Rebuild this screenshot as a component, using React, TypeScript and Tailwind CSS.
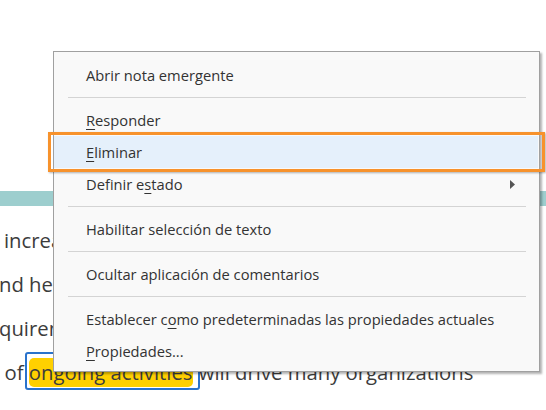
import React from "react";

const Item = ({ children, arrow }: { children: React.ReactNode; arrow?: boolean }) => (
  <div className="relative flex h-[32px] items-center pl-[32px] pr-[30px] whitespace-nowrap">
    <span>{children}</span>
    {arrow && (
      <svg className="absolute right-[24px] top-[12px]" width="5" height="9" viewBox="0 0 5 9">
        <path d="M0 0 L5 4.5 L0 9 Z" fill="#555" />
      </svg>
    )}
  </div>
);

const Sep = () => (
  <div className="py-[6px] pl-[14px] pr-[13px]">
    <div className="h-px bg-[#d4d4d4]" />
  </div>
);

const U = ({ children }: { children: React.ReactNode }) => (
  <span className="underline decoration-1 underline-offset-[3px]">{children}</span>
);

export default function App() {
  return (
    <div
      className="relative h-[410px] w-[546px] overflow-hidden bg-white"
      style={{ fontFamily: '"Open Sans", "Noto Sans", sans-serif' }}
    >
      {/* background document */}
      <div className="pt-[191px] text-[20.3px] text-[#3c3c3c]">
        <div className="h-[15px] bg-[#9dcece]" />
        <div className="mt-[12px] flex flex-col leading-[44px]">
          <div className="ml-[4px] whitespace-nowrap">increasing demands</div>
          <div className="ml-[-1px] whitespace-nowrap">nd help</div>
          <div className="ml-[-1px] whitespace-nowrap">quirements</div>
          <div className="ml-[-8px] flex items-center whitespace-nowrap">
            <span>t of&nbsp;</span>
            <span className="relative flex h-[29px] items-center rounded-[5px] bg-[#ffd000] pr-[1px]">
              <span className="absolute left-[-4px] right-[-7px] top-[-6px] bottom-[-3px] rounded-[3px] border-2 border-[#2a73cc]" />
              <span>ongoing activities</span>
            </span>
            <span>&nbsp;will drive many organizations</span>
          </div>
          <div className="ml-[-2px] mt-[3px] whitespace-nowrap">nd data management quality and compliance</div>
        </div>
      </div>

      {/* context menu */}
      <div className="absolute left-[53px] top-[51px] w-[487px] border border-[#a0a0a0] bg-[#f9f9f9] pt-[7px] pb-[4px] text-[14.7px] text-[#333] shadow-[2px_2px_2px_rgba(0,0,0,0.3)]">
        <Item>Abrir nota emergente</Item>
        <Sep />
        <Item>
          <U>R</U>esponder
        </Item>
        <div className="mr-[1px] bg-[#e5f0fb]">
          <Item>
            <U>E</U>liminar
          </Item>
        </div>
        <Item arrow>
          Definir e<U>s</U>tado
        </Item>
        <Sep />
        <Item>Habilitar selección de texto</Item>
        <Sep />
        <Item>Ocultar aplicación de comentarios</Item>
        <Sep />
        <Item>
          Establecer c<U>o</U>mo predeterminadas las propiedades actuales
        </Item>
        <Item>
          <U>P</U>ropiedades...
        </Item>
      </div>

      {/* orange annotation */}
      <div className="absolute left-[48px] top-[132px] h-[40px] w-[497px] border-[3px] border-[#f7922c] shadow-[1px_1px_2px_rgba(0,0,0,0.3)]" />
    </div>
  );
}
